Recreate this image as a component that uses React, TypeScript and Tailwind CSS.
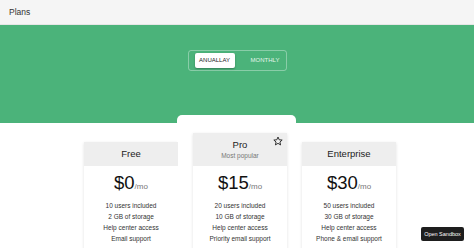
import React from "react";

const font = { fontFamily: '"Liberation Sans", Arial, sans-serif' };

function Star() {
  return (
    <svg width="10" height="10" viewBox="0 0 24 24" fill="none" stroke="#222" strokeWidth="2.2" strokeLinejoin="round">
      <path d="M12 2.5l2.9 6.6 7.1.6-5.4 4.7 1.6 7-6.2-3.8-6.2 3.8 1.6-7L2 9.7l7.1-.6z" />
    </svg>
  );
}

function Card({ title, sub, price, features, star }: { title: string; sub?: string; price: string; features: string[]; star?: boolean }) {
  return (
    <div className="w-[94px] bg-white shadow-[0_1px_3px_rgba(0,0,0,0.12)] flex flex-col">
      <div className={`relative bg-[#eeeeee] flex flex-col items-center justify-center ${sub ? "h-[33px]" : "h-[24px]"}`}>
        <div className="text-[9.5px] leading-[12px] text-[#222]">{title}</div>
        {sub && <div className="text-[6.5px] leading-[10px] text-[#777]">{sub}</div>}
        {star && (
          <div className="absolute right-[4px] top-[3px]">
            <Star />
          </div>
        )}
      </div>
      <div className="flex flex-col items-center pt-[6px] pb-[10px]">
        <div className="flex items-baseline h-[22px]">
          <span className="text-[18.5px] leading-[22px] text-[#111]">{price}</span>
          <span className="text-[8px] text-[#777]">/mo</span>
        </div>
        <div className="mt-[6px] flex flex-col items-center">
          {features.map((f) => (
            <div key={f} className="text-[6.5px] leading-[11px] text-[#333] whitespace-nowrap">{f}</div>
          ))}
        </div>
      </div>
    </div>
  );
}

export default function App() {
  return (
    <div className="w-[474px] h-[248px] overflow-hidden bg-white relative" style={font}>
      <div className="h-[25px] bg-[#f5f5f5] border-b border-[#e6e6e6] flex items-center px-[9px] text-[8.5px] text-[#333]">
        Plans
      </div>
      <div className="h-[98px] bg-[#4bb37a] flex justify-center pt-[25px]">
        <div className="h-[21px] w-[99px] border border-[rgba(255,255,255,0.35)] rounded-[3px] flex items-center px-[6px] gap-[16px]">
          <div className="h-[15px] w-[42px] bg-white rounded-[2px] shadow-[0_1px_2px_rgba(0,0,0,0.3)] flex items-center justify-center text-[6px] text-[#222]">
            ANUALLAY
          </div>
          <div className="text-[6px] text-[#e4f5ea]">MONTHLY</div>
        </div>
      </div>
      <div className="flex items-start pl-[84px] -mt-[8px]">
        <div className="mt-[27px]">
          <Card title="Free" price="$0" features={["10 users included", "2 GB of storage", "Help center access", "Email support"]} />
        </div>
        <div className="-ml-px w-[119px] bg-white rounded-t-[5px] pt-[18px] pl-[16px] pr-[9px]">
          <Card title="Pro" sub="Most popular" star price="$15" features={["20 users included", "10 GB of storage", "Help center access", "Priority email support"]} />
        </div>
        <div className="mt-[27px] ml-[6px]">
          <Card title="Enterprise" price="$30" features={["50 users included", "30 GB of storage", "Help center access", "Phone & email support"]} />
        </div>
      </div>
      <div className="absolute left-[421px] top-[227px] w-[43px] h-[14px] bg-[#1e1e1e] rounded-[2px] flex items-center justify-center text-[5.5px] text-white whitespace-nowrap">
        Open Sandbox
      </div>
    </div>
  );
}
